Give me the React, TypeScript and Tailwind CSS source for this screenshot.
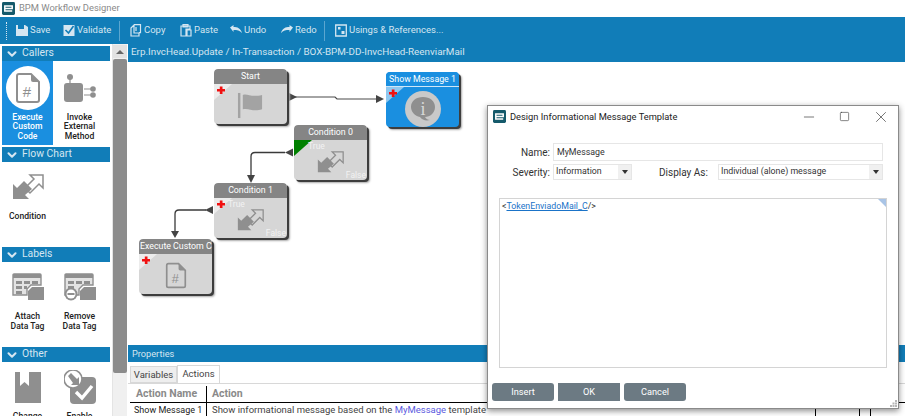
import type { ReactNode } from "react";
import { ChevronDown, Minus, Square, X } from "lucide-react";

const Logo = () => (
  <svg viewBox="0 0 14 14" className="w-[13px] h-[13px] shrink-0">
    <rect width="14" height="14" rx="1.5" fill="#155a6b" />
    <path d="M3 7h8V4.200H3v5.600h8" fill="none" stroke="#fff" strokeWidth="1.600" />
  </svg>
);

const FileHash = ({ className, color = "#8f8f8f" }: { className: string; color?: string }) => (
  <svg viewBox="0 0 26 32" className={className}>
    <path d="M2 4a2 2 0 0 1 2-2h12l8 8v18a2 2 0 0 1-2 2H4a2 2 0 0 1-2-2z" fill="none" stroke={color} strokeWidth="2" />
    <path d="M16 2v6a2 2 0 0 0 2 2h6z" fill={color} />
    <text x="12" y="25" textAnchor="middle" fontSize="15" fontFamily="Liberation Sans, sans-serif" fill={color}>#</text>
  </svg>
);

const ConditionIcon = ({ className }: { className: string }) => (
  <svg viewBox="0 0 32 26" className={className}>
    <path d="M1 25V10l4 4 7-7 8 8-7 6 4 4z" fill="#8f8f8f" />
    <path d="M18 1H31V14L27 10 18 19 13 14 22 5Z" fill="none" stroke="#8f8f8f" strokeWidth="1.500" />
  </svg>
);

const FlagIcon = () => (
  <svg viewBox="0 0 28 28" className="w-[27px] h-[27px]">
    <rect x="1" y="1" width="2.500" height="26" fill="#a3a3a3" />
    <path d="M6 3c5-2 8 3 20 0v15c-10 3-14-2-20 0z" fill="#a3a3a3" />
  </svg>
);

const InfoBubble = () => (
  <svg viewBox="0 0 36 36" className="w-[36px] h-[36px]">
    <circle cx="18" cy="18" r="18" fill="#c9c9c9" />
    <path d="M18 6c7 0 12 4 12 10s-5 10-10 10c1 2 3 3 5 3-4 1-8 0-10-3-5-1-9-5-9-10C6 10 11 6 18 6z" fill="#8f8f8f" />
    <text x="18" y="24" textAnchor="middle" fontSize="18" fontFamily="Liberation Serif, serif" fill="#d9d9d9">i</text>
  </svg>
);

const InvokeIcon = () => (
  <svg viewBox="0 0 32 28" className="w-[32px] h-[28px]">
    <circle cx="6" cy="3" r="3" fill="#8f8f8f" />
    <rect x="5.400" y="5" width="1.200" height="5" fill="#8f8f8f" />
    <rect x="0" y="9" width="19" height="19" rx="3" fill="#8f8f8f" />
    <path d="M20 15h7M20 21h7" stroke="#8f8f8f" strokeWidth="1.200" />
    <circle cx="29" cy="15" r="2.800" fill="#8f8f8f" />
    <circle cx="29" cy="21" r="2.800" fill="#8f8f8f" />
  </svg>
);

const TableTag = ({ remove = false }: { remove?: boolean }) => (
  <svg viewBox="0 0 32 28" className="w-[32px] h-[28px]">
    <path d="M1 22V2a1 1 0 0 1 1-1h26a1 1 0 0 1 1 1v10H19l-4 4v6z" fill="#e3e3e3" stroke="#8f8f8f" strokeWidth="1.400" />
    <rect x="1" y="1" width="28" height="4" fill="#8f8f8f" />
    <path d="M4 8h6v3H4zM12 8h6v3h-6zM20 8h6v3h-6zM4 13h6v3H4zM4 18h6v3H4z" fill="#8f8f8f" />
    {!remove && <path d="M12 13h3v3h-3z" fill="#8f8f8f" />}
    <path d="M16 27V18l4-4h12v13z" fill="#8f8f8f" />
    {remove && (
      <>
        <circle cx="7" cy="21" r="6.500" fill="#8f8f8f" />
        <circle cx="7" cy="21" r="4.500" fill="#fff" />
        <rect x="3.500" y="20" width="7" height="2" fill="#8f8f8f" />
      </>
    )}
  </svg>
);

const BookmarkIcon = () => (
  <svg viewBox="0 0 26 32" className="w-[26px] h-[32px]">
    <path d="M0 1h26v31H0z" fill="#8f8f8f" />
    <path d="M5 0h9v15l-4.500-4L5 15z" fill="#fff" />
  </svg>
);

const EnableIcon = () => (
  <svg viewBox="0 0 32 34" className="w-[32px] h-[34px]">
    <rect x="6" y="7" width="26" height="27" rx="4" fill="#8f8f8f" />
    <path d="m12 22 6 6 10-12" fill="none" stroke="#fff" strokeWidth="3.400" />
    <circle cx="9" cy="9" r="9" fill="#fff" stroke="#8f8f8f" strokeWidth="1.600" />
    <path d="m4 6 3-3 6 6 2-2v8H7l2-2z" fill="#8f8f8f" />
  </svg>
);

const tb = "#d5e6f1";
const toolbarItems: { label: string; width: string; icon: ReactNode }[] = [
  {
    label: "Save",
    width: "w-[47px]",
    icon: <path d="M0 1h9l3 2v9H0zM2 1v4h6V1z" fill={tb} fillRule="evenodd" />,
  },
  {
    label: "Validate",
    width: "w-[56px]",
    icon: (
      <>
        <rect x="0.500" y="1" width="11" height="11" fill={tb} />
        <path d="m2.500 6 3 3 5-7" fill="none" stroke="#117db8" strokeWidth="1.600" />
      </>
    ),
  },
  {
    label: "Copy",
    width: "w-[50px]",
    icon: <path d="M4 .7h6.500v8H9M1 4l3-3v8h5v3H1zM6 3v4" fill="none" stroke={tb} strokeWidth="1.200" />,
  },
  {
    label: "Paste",
    width: "w-[50px]",
    icon: <path d="M1 2h9v3H6v7H1zM3 .6h5V3H3zM7 6h4v6H7z" fill="none" stroke={tb} strokeWidth="1.200" />,
  },
  {
    label: "Undo",
    width: "w-[51px]",
    icon: <path d="M0 3.500 3.500 1v2c4 0 7 1 8.500 6-2-2.500-5-3-8.500-3v2z" fill={tb} />,
  },
  {
    label: "Redo",
    width: "w-[43px]",
    icon: <path d="M12 3.500 8.500 1v2C4.500 3 1.500 4 0 9c2-2.500 5-3 8.500-3v2z" fill={tb} />,
  },
];

const SidebarHeader = ({ title }: { title: string }) => (
  <div className="h-[15px] bg-[#117db8] flex items-center text-[#d5e6f1] text-[10.400px] leading-none pl-[3px] gap-[3px]">
    <ChevronDown className="w-[14px] h-[14px] text-[#d5e6f1]" strokeWidth={3.500} />
    {title}
  </div>
);

const Tile = ({
  lines,
  icon,
  active = false,
  short = false,
}: {
  lines: string[];
  icon: ReactNode;
  active?: boolean;
  short?: boolean;
}) => (
  <div className={`w-[51px] flex flex-col items-center ${active ? "bg-[#1a8fe0] text-white" : "text-[#222]"}`}>
    <div className={`${short ? "h-[44px]" : "h-[52px]"} flex items-center justify-center mt-[3px]`}>{icon}</div>
    <div className={`text-[8.600px] leading-[9.500px] text-center font-medium pb-[4px] ${short ? "mt-[3px]" : "mt-0"}`}>
      {lines.map((l) => (
        <div key={l}>{l}</div>
      ))}
    </div>
  </div>
);

const Corner = ({ blue = false, green = false, plus = true }: { blue?: boolean; green?: boolean; plus?: boolean }) => (
  <svg viewBox="0 0 18 16" className="absolute left-0 top-[15px] w-[18px] h-[16px]">
    <path d="M0 0h18L0 16z" fill={green ? "#008000" : blue ? "#8fc8f0" : "#ececec"} />
    {plus && <path d="M3 5h2.800V2.500h2.700V5H11v2.600H8.500V10H5.800V7.600H3z" fill="#f01010" />}
  </svg>
);

type NodeProps = {
  title: string;
  pos: string;
  children: ReactNode;
  blue?: boolean;
  branch?: boolean;
  green?: boolean;
  plus?: boolean;
};

const FlowNode = ({ title, pos, children, blue = false, branch = false, green = false, plus = true }: NodeProps) => (
  <div
    className={`absolute ${pos} w-[73px] h-[55px] rounded-[4px] overflow-hidden shadow-[2px_2px_0_#3d3d3d,3px_3px_2px_#aaa] ${
      blue ? "bg-[#1a8fe0]" : "bg-[#d6d6d6]"
    }`}
  >
    <div
      className={`h-[15px] px-[1px] rounded-t-[4px] text-white text-[8.800px] leading-[14px] text-center whitespace-nowrap overflow-hidden ${
        blue ? "bg-[#1a8fe0] border-b border-[#cfe6f7]" : "bg-[#858585]"
      }`}
    >
      {title}
    </div>
    <Corner blue={blue} green={green} plus={plus} />
    {branch && (
      <>
        <span className="absolute left-[14px] top-[16px] text-[8.500px] leading-[10px] text-[#f2f2f2]">True</span>
        <span className="absolute right-[1px] bottom-[0px] text-[8.500px] leading-[10px] text-[#f2f2f2]">False</span>
      </>
    )}
    <div className="h-[40px] flex items-center justify-center pt-[3px]">{children}</div>
  </div>
);

const Connectors = () => (
  <svg viewBox="128 62 777 283" className="absolute inset-0 w-[777px] h-[283px] pointer-events-none">
    <path d="M294 97h41l2 2h40" fill="none" stroke="#4a4a4a" strokeWidth="1.200" />
    <path d="M285 152.500h-30q-4 0-4 4v19" fill="none" stroke="#3a3a3a" strokeWidth="1.300" />
    <path d="M206 210h-27q-4 0-4 4v18" fill="none" stroke="#3a3a3a" strokeWidth="1.300" />
    <path d="M289 93v8l8-4zM376 95v8l8-4z" fill="#444" />
    <path d="M293 148.500v8l-8-4zM213 206v8l-8-4z" fill="#444" />
    <path d="M247 175h8l-4 8zM171 231h8l-4 7z" fill="#444" />
  </svg>
);

const Dialog = () => (
  <div className="absolute left-[487px] top-[105px] w-[412px] h-[304px] bg-white border border-[#8a8a8a] shadow-[0_2px_6px_rgba(0,0,0,0.45)] text-[#333]">
    <div className="h-[21px] flex items-center pl-[5px] gap-[4px]">
      <Logo />
      <span className="text-[#222] text-[9.300px]">Design Informational Message Template</span>
      <div className="ml-auto flex items-center gap-[22px] pr-[8px] text-[#333]">
        <Minus className="w-[16px] h-[16px]" strokeWidth={1} />
        <Square className="w-[11px] h-[11px]" strokeWidth={1.300} />
        <X className="w-[18px] h-[18px]" strokeWidth={0.900} />
      </div>
    </div>
    <div className="mt-[16px] flex items-center">
      <span className="w-[62px] text-right text-[10px]">Name:</span>
      <div className="ml-[3px] w-[330px] h-[18px] border border-[#e6e6e6] pl-[3px] text-[8.800px] leading-[16px]">MyMessage</div>
    </div>
    <div className="mt-[3px] flex items-center">
      <span className="w-[62px] text-right text-[10px]">Severity:</span>
      <div className="ml-[3px] w-[79px] h-[16px] border border-[#e6e6e6] flex items-center pl-[2px] text-[8.800px]">
        Information
        <span className="ml-auto w-[13px] h-full bg-[#f0f0f0] flex items-center justify-center">
          <span className="w-0 h-0 border-x-[3px] border-x-transparent border-t-[4px] border-t-[#333]" />
        </span>
      </div>
      <span className="ml-[27px] w-[50px] text-[10px] whitespace-nowrap">Display As:</span>
      <div className="ml-[9px] w-[165px] h-[16px] border border-[#e6e6e6] flex items-center pl-[2px] text-[8.800px]">
        Individual (alone) message
        <span className="ml-auto w-[13px] h-full bg-[#f0f0f0] flex items-center justify-center">
          <span className="w-0 h-0 border-x-[3px] border-x-transparent border-t-[4px] border-t-[#333]" />
        </span>
      </div>
    </div>
    <div className="relative mt-[18px] ml-[11px] w-[388px] h-[170px] border border-[#d4d4d4] pl-[2px] pt-[1px] text-[8.800px] leading-[13px]">
      &lt;<span className="text-[#1a73c8] underline">TokenEnviadoMail_C</span>/&gt;
      <svg viewBox="0 0 8 8" className="absolute right-0 top-0 w-[8px] h-[8px]">
        <path d="M0 0h8v8z" fill="#a9c4e6" />
      </svg>
    </div>
    <div className="mt-[15px] ml-[4px] flex gap-[4px] text-white text-[9.200px]">
      <div className="w-[62px] h-[18px] rounded-[3px] bg-[#6c7a83] flex items-center justify-center">Insert</div>
      <div className="w-[62px] h-[18px] bg-[#6c7a83] flex items-center justify-center">OK</div>
      <div className="w-[62px] h-[18px] rounded-[3px] bg-[#6c7a83] flex items-center justify-center">Cancel</div>
    </div>
    <svg viewBox="0 0 7 7" className="absolute right-[1px] bottom-[1px] w-[7px] h-[7px]">
      <path d="M5 0h2v2H5zM2.500 2.500h2v2h-2zM5 2.500h2v2H5zM0 5h2v2H0zM2.500 5h2v2h-2zM5 5h2v2H5z" fill="#b5b5b5" />
    </svg>
  </div>
);

export default function App() {
  return (
    <div className="relative w-[905px] h-[416px] overflow-hidden bg-white font-['Roboto',sans-serif]">
      <div className="h-[17px] flex items-center pl-[2px] gap-[4px]">
        <Logo />
        <span className="text-[9.400px] text-[#8a8a8a]">BPM Workflow Designer</span>
      </div>

      <div className="h-[27px] bg-[#117db8] flex items-center pl-[6px] text-[9.500px] text-[#d5e6f1]">
        <div className="w-px h-[18px] border-l border-dotted border-[#d5e6f1] mr-[9px]" />
        {toolbarItems.map((item) => (
          <div key={item.label} className="contents">
            <div className={`${item.width} flex items-center gap-[2px] shrink-0`}>
              <svg viewBox="0 0 12 13" className="w-[12px] h-[13px] shrink-0">
                {item.icon}
              </svg>
              {item.label}
            </div>
            {item.label === "Validate" && <div className="w-px h-[20px] bg-[#5ba6d0] mr-[10px]" />}
            {item.label === "Redo" && <div className="w-px h-[20px] bg-[#5ba6d0] mr-[10px]" />}
          </div>
        ))}
        <div className="flex items-center gap-[2px]">
          <svg viewBox="0 0 12 13" className="w-[12px] h-[13px] shrink-0">
            <path d="M.7 1h10.600v11H.7z" fill="none" stroke={tb} strokeWidth="1.300" />
            <path d="M3 3h2.500v2.500H3zM6.500 7h3v3h-3z" fill={tb} />
          </svg>
          Usings &amp; References...
        </div>
      </div>

      <div className="h-[372px] flex">
        <div className="w-[128px] shrink-0 h-full flex bg-white">
          <div className="w-[113px] pl-[2px] pr-[2px] pt-[2px] border-r border-[#e4e4e4]">
            <SidebarHeader title="Callers" />
            <div className="h-[84px] flex gap-px">
              <Tile
                active
                lines={["Execute", "Custom", "Code"]}
                icon={
                  <div className="w-[44px] h-[44px] rounded-full bg-white flex items-center justify-center">
                    <FileHash className="w-[26px] h-[32px]" />
                  </div>
                }
              />
              <Tile lines={["Invoke", "External", "Method"]} icon={<InvokeIcon />} />
            </div>
            <div className="h-[2px]" />
            <SidebarHeader title="Flow Chart" />
            <div className="h-[83px]">
              <Tile short lines={["Condition"]} icon={<ConditionIcon className="w-[32px] h-[26px]" />} />
            </div>
            <div className="h-[2px]" />
            <SidebarHeader title="Labels" />
            <div className="h-[83px] flex gap-px">
              <Tile short lines={["Attach", "Data Tag"]} icon={<TableTag />} />
              <Tile short lines={["Remove", "Data Tag"]} icon={<TableTag remove />} />
            </div>
            <div className="h-[2px]" />
            <SidebarHeader title="Other" />
            <div className="flex gap-px">
              <Tile short lines={["Change"]} icon={<BookmarkIcon />} />
              <Tile short lines={["Enable"]} icon={<EnableIcon />} />
            </div>
          </div>
          <div className="w-[14px] bg-[#f0f0f0] flex flex-col gap-px pt-px">
            <div className="h-[13px] bg-[#e2e2e2] flex items-center justify-center">
              <span className="w-0 h-0 border-x-[4px] border-x-transparent border-b-[4px] border-b-[#666]" />
            </div>
            <div className="h-[314px] bg-[#8c8c8c] rounded-[2px]" />
          </div>
        </div>

        <div className="flex-1 min-w-0 flex flex-col">
          <div className="h-[18px] bg-[#117db8] text-[#d5e6f1] text-[9.850px] leading-[16px] pl-[3px]">
            Erp.InvcHead.Update / In-Transaction / BOX-BPM-DD-InvcHead-ReenviarMail
          </div>
          <div className="relative h-[283px]">
            <Connectors />
            <FlowNode title="Start" pos="left-[86px] top-[7px]">
              <FlagIcon />
            </FlowNode>
            <FlowNode title="Show Message 1" pos="left-[258px] top-[10px]" blue>
              <InfoBubble />
            </FlowNode>
            <FlowNode title="Condition 0" pos="left-[166px] top-[63px]" branch green plus={false}>
              <ConditionIcon className="w-[27px] h-[22px]" />
            </FlowNode>
            <FlowNode title="Condition 1" pos="left-[86px] top-[121px]" branch>
              <ConditionIcon className="w-[27px] h-[22px]" />
            </FlowNode>
            <FlowNode title="Execute Custom Code" pos="left-[11px] top-[177px]">
              <FileHash className="w-[22px] h-[27px]" />
            </FlowNode>
          </div>
          <div className="h-[17px] bg-[#117db8] text-[#d5e6f1] text-[9.200px] leading-[17px] pl-[4px]">Properties</div>
          <div className="h-[54px] bg-white text-[9.500px] text-[#444]">
            <div className="h-[22px] flex items-end pl-[2px] border-b border-[#d8d8d8]">
              <div className="w-[47px] h-[17px] bg-[#eeeeee] border border-[#d8d8d8] text-center leading-[15px]">Variables</div>
              <div className="w-[43px] h-[18px] bg-white border border-b-0 border-[#d8d8d8] text-center leading-[16px]">Actions</div>
            </div>
            <div className="ml-[2px] mt-[2px] h-[17px] flex border-b border-black font-bold text-[#8a8a8a] text-[10.500px] leading-[16px]">
              <div className="w-[76px] pl-[6px] whitespace-nowrap">Action Name</div>
              <div className="flex-1 border-l border-black pl-[5px]">Action</div>
            </div>
            <div className="ml-[2px] h-[14px] flex leading-[14px] whitespace-nowrap">
              <div className="w-[76px] pl-[4px] text-[#222] text-[9px] overflow-hidden">Show Message 1</div>
              <div className="w-[609px] border-l border-black pl-[5px]">
                Show informational message based on the <span className="text-[#5a5ae0]">MyMessage</span> template
              </div>
              <div className="w-[44px] border-l border-black" />
              <div className="w-[11px] border-l border-black" />
              <div className="flex-1 border-l border-black" />
            </div>
          </div>
        </div>
      </div>

      <Dialog />
    </div>
  );
}
